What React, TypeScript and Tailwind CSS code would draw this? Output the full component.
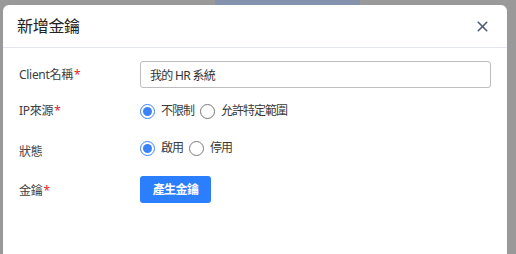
import { X } from "lucide-react";

const font = { fontFamily: '"Noto Sans", "Noto Sans CJK TC", sans-serif' };

function Radio({ checked, label }: { checked?: boolean; label: string }) {
  return (
    <label className="flex items-center gap-[6px]">
      <span
        className={
          checked
            ? "flex h-[15px] w-[15px] items-center justify-center rounded-full border border-[#3b82f6] bg-white"
            : "h-[15px] w-[15px] rounded-full border border-[#7a7a7a] bg-white"
        }
      >
        {checked && <span className="h-[9px] w-[9px] rounded-full bg-[#3b82f6]" />}
      </span>
      <span className="text-[12px] tracking-[-1px] text-[#3a3a3a]">{label}</span>
    </label>
  );
}

function Label({ text, required }: { text: string; required?: boolean }) {
  return (
    <div className="w-[121px] shrink-0 text-[12px] tracking-[-0.3px] text-[#404040]">
      {text}
      {required && <span className="ml-[1px] text-[#e5242b]">*</span>}
    </div>
  );
}

export default function App() {
  return (
    <div className="relative h-[254px] w-[516px] overflow-hidden bg-[#999999]" style={font}>
      <div className="absolute left-[215px] top-0 h-[5px] w-[145px] bg-[#8592ad]" />
      <div className="relative ml-[3px] mt-[5px] h-[260px] w-[504px] rounded-t-[6px] bg-white">
        <div className="flex h-[43px] items-center justify-between border-b border-[#e3e6ee] pl-[14px] pr-[16px]">
          <h2 className="text-[16px] tracking-[-0.3px] text-[#222]">新增金鑰</h2>
          <X className="h-[17px] w-[17px] text-[#4b5a75]" strokeWidth={2.2} />
        </div>

        <div className="pl-[16px] pr-[16px] pt-[13px]">
          <div className="flex h-[27px] items-center">
            <Label text="Client名稱" required />
            <input
              readOnly
              value="我的 HR 系統"
              className="h-[27px] w-[351px] rounded-[3px] border border-[#bdbdbd] px-[9px] text-[12px] tracking-[-0.7px] text-[#333] outline-none"
              style={font}
            />
          </div>

          <div className="mt-[13px] flex h-[20px] items-center">
            <Label text="IP來源" required />
            <div className="flex items-center gap-[6px]">
              <Radio checked label="不限制" />
              <Radio label="允許特定範圍" />
            </div>
          </div>

          <div className="mt-[17px] flex h-[20px] items-center">
            <div className="mt-[8px]">
              <Label text="狀態" />
            </div>
            <div className="flex items-center gap-[6px]">
              <Radio checked label="啟用" />
              <Radio label="停用" />
            </div>
          </div>

          <div className="mt-[18px] flex h-[27px] items-center">
            <div className="mt-[2px]">
              <Label text="金鑰" required />
            </div>
            <button className="h-[27px] w-[71px] rounded-[3px] bg-[#2b7fff] text-[12px] font-bold tracking-[-0.6px] text-white">
              產生金鑰
            </button>
          </div>
        </div>
      </div>
    </div>
  );
}
